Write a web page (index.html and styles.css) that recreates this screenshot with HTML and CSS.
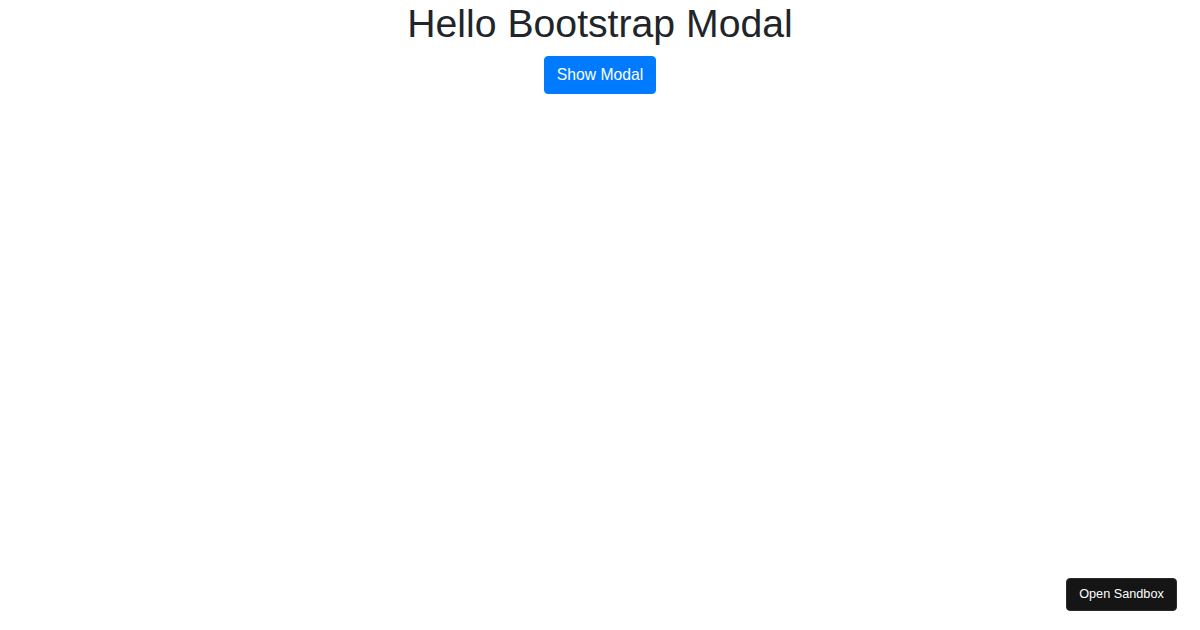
FILE: index.html
```html
<!DOCTYPE html>
<html lang="en">
<head>
    <meta charset="UTF-8">
    <meta name="viewport" content="width=device-width, initial-scale=1.0">
    <title>Hello Bootstrap Modal</title>
    <link rel="stylesheet" href="styles.css">
</head>
<body>
    <div class="app">
        <h1>Hello Bootstrap Modal</h1>
        <button type="button" class="btn-primary">Show Modal</button>
    </div>
    <a class="sandbox-link" href="#">Open Sandbox</a>
</body>
</html>
```

FILE: styles.css
```css
body {
    margin: 0;
    font-family: "Liberation Sans", Arial, sans-serif;
    font-size: 16px;
    line-height: 1.5;
    color: #212529;
    background-color: #ffffff;
}

.app {
    text-align: center;
}

h1 {
    margin: 0 0 8px;
    font-size: 39.2px;
    font-weight: 400;
    line-height: 48px;
}

.btn-primary {
    display: inline-block;
    padding: 6px 12px;
    font-family: inherit;
    font-size: 15.7px;
    line-height: 24px;
    color: #ffffff;
    background-color: #007bff;
    border: 1px solid #007bff;
    border-radius: 4px;
    cursor: pointer;
}

.btn-primary:hover {
    background-color: #0069d9;
    border-color: #0062cc;
}

.sandbox-link {
    position: fixed;
    right: 23px;
    bottom: 19px;
    width: 111px;
    height: 33px;
    box-sizing: border-box;
    display: flex;
    align-items: center;
    justify-content: center;
    font-size: 12.7px;
    color: #ffffff;
    background-color: #151515;
    border: 1px solid #2a2a2a;
    border-radius: 4px;
    text-decoration: none;
}
```
